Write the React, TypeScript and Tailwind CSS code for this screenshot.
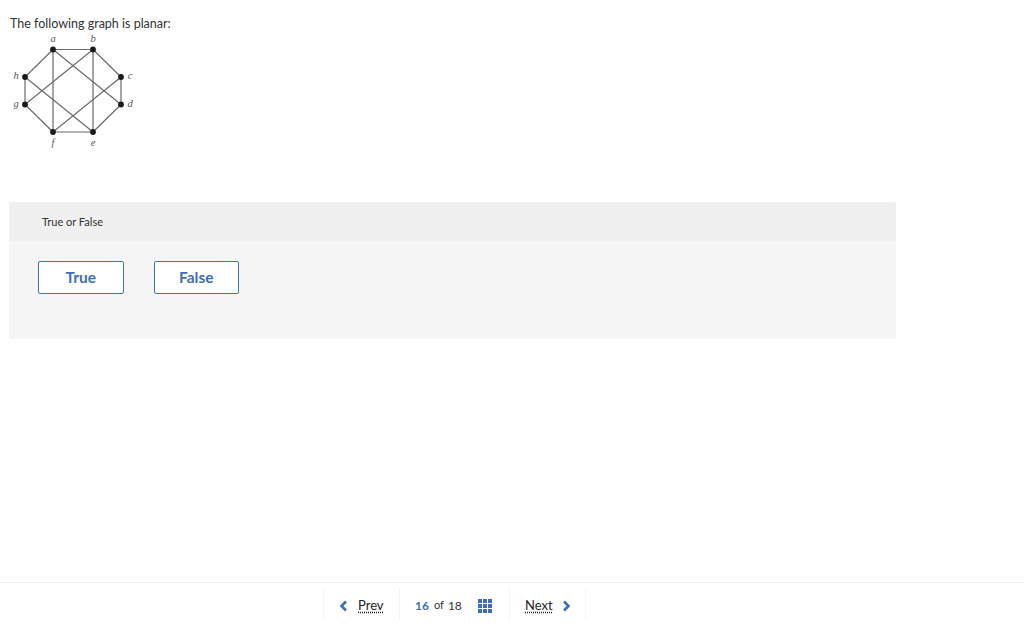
const vertices = [
  { id: "a", x: 53, y: 49.5, lx: 53, ly: 42 },
  { id: "b", x: 93, y: 49.5, lx: 93, ly: 42 },
  { id: "c", x: 121, y: 77, lx: 130, ly: 79 },
  { id: "d", x: 121, y: 104.5, lx: 130, ly: 107 },
  { id: "e", x: 93, y: 132, lx: 93, ly: 146 },
  { id: "f", x: 53, y: 132, lx: 53, ly: 146 },
  { id: "g", x: 25, y: 104.5, lx: 16, ly: 107 },
  { id: "h", x: 25, y: 77, lx: 16, ly: 79 },
];

const edges = ["ab", "bc", "cd", "de", "ef", "fg", "gh", "ha", "af", "be", "ad", "he", "bg", "cf"];

function Graph() {
  const at = (id: string) => vertices.find((v) => v.id === id)!;
  return (
    <svg width="140" height="122" viewBox="10 33 140 122" className="block">
      {edges.map((e) => (
        <line
          key={e}
          x1={at(e[0]).x}
          y1={at(e[0]).y}
          x2={at(e[1]).x}
          y2={at(e[1]).y}
          stroke="#6b6b6b"
          strokeWidth="1.2"
        />
      ))}
      {vertices.map((v) => (
        <g key={v.id}>
          <circle cx={v.x} cy={v.y} r="2.9" fill="#1a1a1a" />
          <text
            x={v.lx}
            y={v.ly}
            textAnchor="middle"
            fontSize="10.5"
            fontStyle="italic"
            fill="#555"
            fontFamily="'Liberation Serif', serif"
          >
            {v.id}
          </text>
        </g>
      ))}
    </svg>
  );
}

function AnswerButton({ label }: { label: string }) {
  return (
    <button className="w-[85.5px] h-[33px] bg-white border border-[#3f75b8] rounded-[2px] text-[15.5px] font-bold text-[#3f6fb0]">
      {label}
    </button>
  );
}

export default function App() {
  return (
    <div className="h-[628px] flex flex-col bg-white font-['Lato',sans-serif] text-[#333]">
      <div className="flex-1 pl-[9px]">
        <p className="pt-[16px] pl-px text-[12.5px] leading-[16px]">The following graph is planar:</p>
        <div className="mt-px pl-px">
          <Graph />
        </div>
        <div className="mt-[47px] w-[887px] h-[137px] bg-[#f5f5f5] rounded-[3px]">
          <div className="h-[39px] bg-[#f0f0f0] pl-[33px] pt-px flex items-center text-[11px] rounded-t-[3px]">
            True or False
          </div>
          <div className="pt-[20px] pl-[29px] flex gap-[30px]">
            <AnswerButton label="True" />
            <AnswerButton label="False" />
          </div>
        </div>
      </div>
      <div className="h-[46px] border-t border-[#f0f0f0] pt-[4px] pl-[323px] text-[13px]">
        <div className="w-[263px] h-[34px] flex border-x border-[#f5f5f5]">
          <div className="w-[76px] shrink-0 flex items-center pl-[15px] pt-[3px] gap-[10px] border-r border-[#f5f5f5]">
            <svg width="9" height="12" viewBox="0 0 9 12" fill="none" className="text-[#3f6fb0]">
              <path d="M7 1.5 2.5 6 7 10.5" stroke="currentColor" strokeWidth="2.6" />
            </svg>
            <span className="underline decoration-dotted underline-offset-2 text-[#222]">Prev</span>
          </div>
          <div className="w-[110px] shrink-0 flex items-center pl-[15px] pt-[3px] border-r border-[#f5f5f5] whitespace-nowrap">
            <span className="font-bold text-[#3f6fb0] text-[12px]">16</span>
            <span className="ml-[5px] text-[11px]">of</span>
            <span className="ml-[4px] text-[12px]">18</span>
            <div className="ml-[16px] grid grid-cols-3 gap-px w-[14px] shrink-0">
              {Array.from({ length: 9 }).map((_, i) => (
                <span key={i} className="h-[4px] bg-[#3f6fb0]" />
              ))}
            </div>
          </div>
          <div className="w-[75px] shrink-0 flex items-center pl-[15px] pt-[3px] gap-[9px]">
            <span className="underline decoration-dotted underline-offset-2 text-[#222]">Next</span>
            <svg width="9" height="12" viewBox="0 0 9 12" fill="none" className="text-[#3f6fb0]">
              <path d="M2 1.5 6.5 6 2 10.5" stroke="currentColor" strokeWidth="2.6" />
            </svg>
          </div>
        </div>
      </div>
    </div>
  );
}
